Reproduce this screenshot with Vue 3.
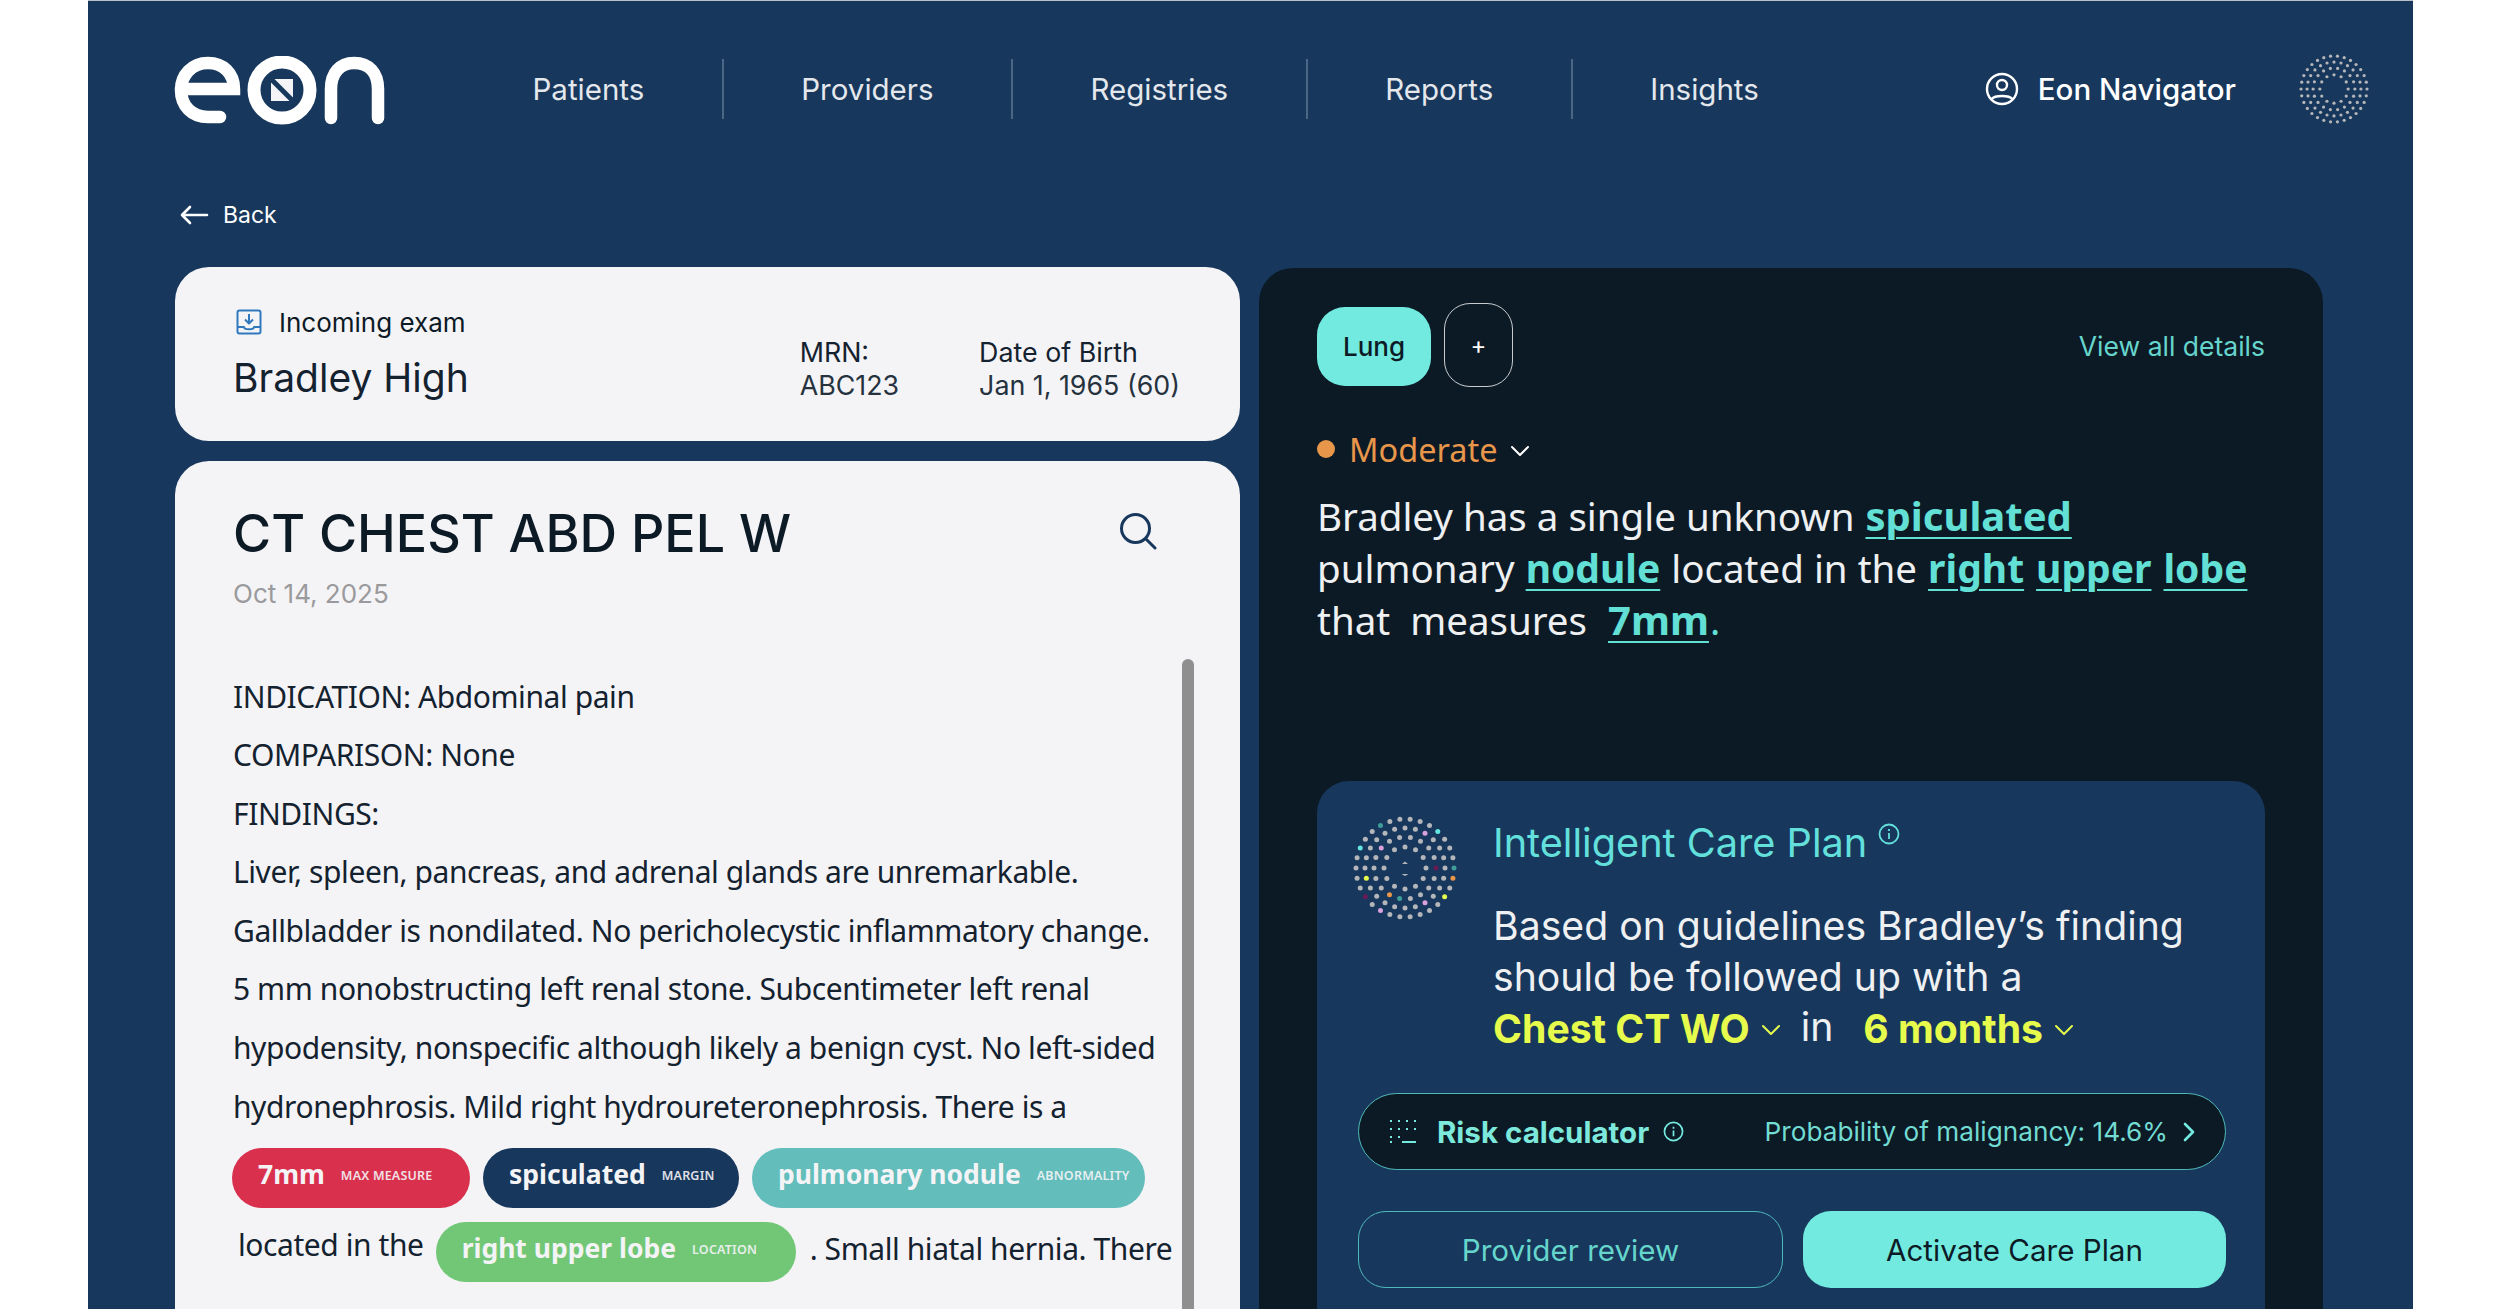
<script setup>
const COLORS = [
  [120,70,'#3f9f98'],[255,95,'#d9a2dc'],[293,88,'#63e6e0'],[60,138,'#63e6e0'],[124,138,'#d9a2dc'],
  [288,198,'#6a1a55'],[342,198,'#3f9f98'],[79,229,'#e6fb4c'],[340,229,'#e8964a'],[148,279,'#e8964a'],
  [178,289,'#3f9f98'],[75,285,'#6a1a55'],[314,285,'#e6fb4c'],[255,302,'#d9a2dc'],[120,326,'#d9a2dc']
]
function ringDots(colored) {
  const rings = [[49,30],[40,24],[31,18],[21,12]]
  const out = []
  for (const [r,n] of rings) {
    for (let i = 0; i < n; i++) {
      const a = (i * 360 / n) * Math.PI / 180
      out.push({ x: 52 + r * Math.cos(a), y: 52 + r * Math.sin(a), c: '#b4b6ba', k: r + '-' + i })
    }
  }
  if (colored) {
    for (const [zx,zy,col] of COLORS) {
      const px = zx / 3 - 13, py = zy / 3 - 14
      let best = out[0], bd = 1e9
      for (const d of out) {
        const dist = Math.hypot(d.x - px, d.y - py)
        if (dist < bd) { bd = dist; best = d }
      }
      best.c = col
    }
  }
  return out
}
const careDots = ringDots(true)
const navDots = ringDots(false)
const nav = ['Patients','Providers','Registries','Reports','Insights']
const lines = [
  'INDICATION: Abdominal pain',
  'COMPARISON: None',
  'FINDINGS:',
  'Liver, spleen, pancreas, and adrenal glands are unremarkable.',
  'Gallbladder is nondilated. No pericholecystic inflammatory change.',
  '5 mm nonobstructing left renal stone. Subcentimeter left renal',
  'hypodensity, nonspecific although likely a benign cyst. No left-sided',
  'hydronephrosis. Mild right hydroureteronephrosis. There is a'
]
</script>

<template>
  <div class="page">
    <header class="top">
      <svg class="logo" viewBox="0 0 212 70" fill="none" stroke="#fff" stroke-width="12.5" stroke-linecap="round">
        <path d="M7 33H60C60 17 49 7 34 7C18 7 7 19 7 34C7 50 18 61 34 61H46"/>
        <circle cx="108" cy="34" r="28" stroke-width="13"/>
        <path d="M157 62V33C157 17 166 7 180 7C195 7 204 17 204 33V62"/>
        <path d="M97 23H119V45H97Z" fill="#f4f4f7" stroke="none"/>
        <path d="M95 21L121 47" stroke="#17375c" stroke-width="5" stroke-linecap="butt"/>
      </svg>
      <nav class="nav">
        <a v-for="n in nav" :key="n" class="nav-item">{{ n }}</a>
      </nav>
      <div class="user">
        <svg class="user-ico" viewBox="0 0 34 34" fill="none" stroke="#fff" stroke-width="2.4">
          <circle cx="17" cy="17" r="15"/>
          <circle cx="17" cy="13" r="5"/>
          <path d="M6.5 27C10 23 24 23 27.5 27"/>
        </svg>
        <span>Eon Navigator</span>
      </div>
      <svg class="nav-dots" viewBox="0 0 104 104">
        <circle v-for="d in navDots" :key="d.k" :cx="d.x" :cy="d.y" r="2.4" :fill="d.c"/>
      </svg>
    </header>

    <div class="back">
      <svg viewBox="0 0 30 22" fill="none" stroke="#fff" stroke-width="2.6" stroke-linecap="round" stroke-linejoin="round">
        <path d="M28 11H3M11 3L3 11L11 19"/>
      </svg>
      <span>Back</span>
    </div>

    <main class="cols">
      <section class="left">
        <div class="card patient">
          <div class="who">
            <div class="incoming">
              <svg viewBox="0 0 26 26" fill="none" stroke="#2f78bd" stroke-width="2">
                <rect x="1.5" y="1.5" width="23" height="23" rx="2"/>
                <path d="M13 5V14M9 10.5L13 14.5L17 10.5M1.5 18H8C8 21 18 21 18 18H24.5" stroke-linejoin="round"/>
              </svg>
              <span>Incoming exam</span>
            </div>
            <div class="name">Bradley High</div>
          </div>
          <div class="meta mrn"><div>MRN:</div><div class="val">ABC123</div></div>
          <div class="meta"><div>Date of Birth</div><div class="val">Jan 1, 1965 (60)</div></div>
        </div>

        <div class="card report">
          <div class="rep-head">
            <div>
              <h1>CT CHEST ABD PEL W</h1>
              <div class="date">Oct 14, 2025</div>
            </div>
            <svg class="search" viewBox="0 0 38 38" fill="none" stroke="#17375c" stroke-width="3" stroke-linecap="round">
              <circle cx="16.5" cy="16.5" r="14"/>
              <path d="M27 27L36 36"/>
            </svg>
          </div>
          <div class="scrollbar"></div>
          <div class="rep-body">
            <p v-for="l in lines" :key="l">{{ l }}</p>
            <div class="pills">
              <span class="pill red"><span>7mm</span> <small>MAX MEASURE</small></span>
              <span class="pill navy"><span>spiculated</span> <small>MARGIN</small></span>
              <span class="pill teal"><span>pulmonary nodule</span> <small>ABNORMALITY</small></span>
            </div>
            <div class="pills second">
              <span class="located">located in the</span>
              <span class="pill green"><span>right upper lobe</span> <small>LOCATION</small></span>
              <span class="after">. Small hiatal hernia. There</span>
            </div>
            <p class="cut">is no acute or identified bibasilar focal airspace disease</p>
          </div>
        </div>
      </section>

      <section class="right">
        <div class="tabs">
          <button class="lung">Lung</button>
          <button class="plus">+</button>
          <a class="details">View all details</a>
        </div>
        <div class="risk">
          <i class="dot"></i>
          <span>Moderate</span>
          <svg viewBox="0 0 20 12" fill="none" stroke="#fff" stroke-width="2" stroke-linecap="round" stroke-linejoin="round">
            <path d="M2 2L10 10L18 2"/>
          </svg>
        </div>
        <p class="summary">
          Bradley has a single unknown <b>spiculated</b><br>
          <span class="l2">pulmonary <b>nodule</b> located in the <b>right</b> <b>upper</b> <b>lobe</b></span><br>
          <span class="l3">that measures <b>7mm</b><span class="period">.</span></span>
        </p>

        <div class="care">
          <div class="care-top">
            <svg class="care-logo" viewBox="0 0 104 104">
              <circle v-for="d in careDots" :key="d.k" :cx="d.x" :cy="d.y" r="2.5" :fill="d.c"/>
              <path d="M52 45.5L55 48H49Z M48.5 58H55.5L52 60Z" fill="#b4b6ba"/>
            </svg>
            <div class="care-txt">
              <h2>Intelligent Care Plan
                <svg class="sup" viewBox="0 0 22 22" fill="none" stroke="#63e0dc" stroke-width="1.8">
                  <circle cx="11" cy="11" r="9.5"/>
                  <path d="M11 10V16M11 6V8"/>
                </svg>
              </h2>
              <p>Based on guidelines Bradley’s finding<br>should be followed up with a</p>
              <div class="choice">
                <b>Chest CT WO</b>
                <svg viewBox="0 0 20 12" fill="none" stroke="#e6fb4c" stroke-width="2" stroke-linecap="round" stroke-linejoin="round"><path d="M2 2L10 10L18 2"/></svg>
                <span class="in">in</span>
                <b>6 months</b>
                <svg viewBox="0 0 20 12" fill="none" stroke="#e6fb4c" stroke-width="2" stroke-linecap="round" stroke-linejoin="round"><path d="M2 2L10 10L18 2"/></svg>
              </div>
            </div>
          </div>
          <div class="calc">
            <svg class="grid-ico" viewBox="0 0 26 24" fill="#72eadf">
              <rect v-for="p in [[0,0],[8,0],[16,0],[24,0],[0,8],[8,8],[16,8],[24,8],[0,16],[8,16]]" :key="p.join()" :x="p[0]" :y="p[1]" width="2" height="2"/>
              <rect x="12" y="21" width="14" height="2"/>
              <rect x="0" y="21" width="2" height="2"/>
            </svg>
            <b>Risk calculator</b>
            <svg class="info" viewBox="0 0 22 22" fill="none" stroke="#72eadf" stroke-width="1.8">
              <circle cx="11" cy="11" r="9.5"/>
              <path d="M11 10V16M11 6V8"/>
            </svg>
            <span class="prob">Probability of malignancy: 14.6%</span>
            <svg class="chev" viewBox="0 0 12 20" fill="none" stroke="#72eadf" stroke-width="2.6" stroke-linecap="round" stroke-linejoin="round"><path d="M2 2L10 10L2 18"/></svg>
          </div>
          <div class="actions">
            <button class="ghost">Provider review</button>
            <button class="solid">Activate Care Plan</button>
          </div>
        </div>
      </section>
    </main>
  </div>
</template>

<style>
html, body { margin: 0; background: #fff; overflow: hidden; height: 1309px; }
</style>

<style scoped>
.page {
  box-sizing: border-box;
  width: 2325px;
  height: 1309px;
  margin-left: 88px;
  background: #17375c;
  border-top: 1px solid #b9c0c8;
  overflow: hidden;
  font-family: Inter, "Liberation Sans", sans-serif;
  color: #fff;
}
.top {
  display: flex;
  align-items: center;
  height: 176px;
  padding: 0 44px 0 86px;
}
.logo { width: 212px; height: 70px; flex: none; margin-top: 3px; }
.nav { display: flex; margin-left: 69px; }
.nav-item {
  padding: 0 77.5px;
  height: 60px;
  line-height: 60px;
  font-size: 29.5px;
  color: #e4e8ed;
  border-right: 2px solid #4b6584;
}
.nav-item:last-child { border-right: none; }
.user { margin-left: auto; display: flex; align-items: center; gap: 19px; font-size: 29.5px; font-weight: 500; margin-right: 63px; }
.user-ico { width: 34px; height: 34px; }
.nav-dots { width: 70px; height: 70px; }
.back {
  display: flex; align-items: center; gap: 14px;
  padding-left: 91px;
  height: 76px;
  font-size: 23px;
  box-sizing: border-box;
  margin-bottom: 14px;
}
.back svg { width: 30px; height: 22px; }
.cols { display: flex; gap: 19px; padding-left: 87px; align-items: flex-start; }
.left { width: 1065px; display: flex; flex-direction: column; gap: 20px; flex: none; }
.card { background: #f4f4f7; border-radius: 34px; color: #0c1a26; }
.patient {
  height: 174px; box-sizing: border-box;
  display: flex; align-items: flex-start;
  padding: 40px 60px 0 58px;
}
.who { flex: 1; }
.incoming { display: flex; align-items: center; gap: 17px; font-size: 26px; height: 30px; }
.incoming svg { width: 26px; height: 26px; margin-left: 3px; }
.name { font-size: 39px; margin-top: 17px; color: #14222f; }
.meta { font-size: 26.8px; line-height: 33px; margin-top: 29px; color: #14222f; }
.meta .val { color: #26333f; }
.mrn { margin-right: 80px; }
.report { position: relative; height: 900px; padding: 0 0 0 58px; box-sizing: border-box; }
.rep-head { display: flex; justify-content: space-between; padding: 43px 83px 0 0; height: 198px; box-sizing: border-box; }
h1 { margin: 0; font-size: 52px; font-weight: 500; line-height: 60px; color: #0c1a26; }
.date { font-size: 26px; color: #9a9a9c; margin-top: 14px; }
.search { width: 38px; height: 38px; margin-top: 8px; }
.scrollbar {
  position: absolute; left: 1007px; top: 198px; bottom: 0; width: 12px;
  background: #8f8f90; border-radius: 6px 6px 0 0;
}
.rep-body { font-family: "Noto Sans", sans-serif; font-size: 30px; color: #14222f; padding-top: 8.5px; }
.rep-body p { margin: 0; height: 58.6px; line-height: 58.6px; white-space: nowrap; letter-spacing: -0.42px; }
.pills { display: flex; gap: 13px; margin-top: 11.5px; height: 60px; align-items: center; margin-left: -1px; }
.pill {
  height: 60px; box-sizing: border-box; padding: 0 20px 8px 26px;
  border-radius: 30px; color: #f4f4f7; font-size: 26.5px; font-weight: 700; white-space: nowrap;
  display: inline-flex; align-items: center; gap: 16px;
}
.pill small { font-size: 12.5px; font-weight: 600; opacity: .9; margin-top: 4px; letter-spacing: .2px; }
.red { background: #d9304e; width: 238px; }
.navy { background: #17375c; width: 256px; }
.teal { background: #62bdbb; width: 393px; }
.green { background: #72c776; width: 360px; }
.second { margin-top: 14px; gap: 0; }
.located { margin-left: 6px; margin-right: 12px; margin-top: -14px; letter-spacing: -0.42px; }
.after { margin-left: 14px; margin-top: -6px; letter-spacing: -0.42px; }
.rep-body p.cut { margin-top: 14px; }
.right {
  flex: none; width: 1064px; height: 1100px; box-sizing: border-box;
  background: #0c1a26; border-radius: 34px; padding: 35px 58px 0 58px;
  margin-top: 1px;
}
.tabs { display: flex; align-items: center; gap: 13px; height: 84px; }
button { font-family: inherit; border: none; padding: 0; }
.lung {
  width: 114px; height: 79px; border-radius: 28px; background: #72eadf;
  color: #0c1a26; font-size: 26px; font-weight: 500; margin-top: 2px;
}
.plus {
  width: 69px; height: 84px; border-radius: 26px; background: transparent;
  border: 1.5px solid #c8ccd0; color: #fff; font-size: 24px;
}
.details { margin-left: auto; margin-top: 2px; font-size: 26.5px; color: #66d6cd; }
.risk { display: flex; align-items: center; margin-top: 42px; height: 40px; font-family: "Noto Sans", sans-serif; font-size: 32.5px; color: #e8964a; }
.dot { width: 18px; height: 18px; border-radius: 50%; background: #e8964a; margin-right: 14px; }
.risk svg { width: 20px; height: 12px; margin-left: 12px; margin-top: 4px; }
.summary {
  margin: 21px 0 0; font-family: "Noto Sans", sans-serif; font-size: 38.5px; line-height: 52px; color: #eef0f2; white-space: nowrap;
}
.summary b, .period { color: #63e0d6; }
.summary b { font-size: 40px; margin: 0 1px; text-decoration: underline; text-underline-offset: 6px; text-decoration-thickness: 2px; font-weight: 700; }
.summary .l2 b { font-size: 39px; }
.l3 { word-spacing: 10px; }
.care {
  margin-top: 135px; background: #17375c; border-radius: 32px; height: 560px;
  box-sizing: border-box; padding: 35px 40px 0 36px;
}
.care-top { display: flex; gap: 36px; }
.care-logo { width: 104px; height: 104px; flex: none; }
.care-txt { flex: 1; }
h2 { margin: 0; font-size: 39.7px; font-weight: 400; color: #63e0dc; line-height: 50px; margin-top: 2px; }
.sup { width: 22px; height: 22px; vertical-align: 12px; }
.care-txt p { margin: 32px 0 0; font-size: 39.2px; line-height: 51px; color: #eef0f2; white-space: nowrap; }
.choice { display: flex; align-items: center; font-size: 39.2px; height: 52px; color: #e6fb4c; }
.choice b { font-weight: 700; }
.choice svg { width: 20px; height: 12px; margin-left: 11px; margin-top: 4px; }
.in { color: #eef0f2; margin: -4px 30px 0 20px; }
.calc {
  display: flex; align-items: center; box-sizing: border-box; height: 77px; margin: 39px 0 0 5px; width: 868px;
  background: #0c1a26; border: 1.5px solid #4fb9b9; border-radius: 39px; padding: 0 30px 0 31px;
  color: #72eadf;
}
.grid-ico { width: 26px; height: 24px; }
.calc b { margin-left: 21px; font-size: 29.5px; font-weight: 700; color: #7de8dc; }
.info { width: 21px; height: 21px; margin-left: 14px; }
.prob { margin-left: auto; font-size: 26.2px; color: #72dcd2; }
.chev { width: 12px; height: 20px; margin-left: 15px; }
.actions { display: flex; gap: 20px; margin: 41px 0 0 5px; width: 868px; }
.actions button { flex: 1; height: 77px; border-radius: 28px; font-size: 29.6px; }
.ghost { background: transparent; border: 1.5px solid #4fb9b9; color: #66d6cd; }
.solid { background: #72eadf; color: #0c1a26; }
</style>
